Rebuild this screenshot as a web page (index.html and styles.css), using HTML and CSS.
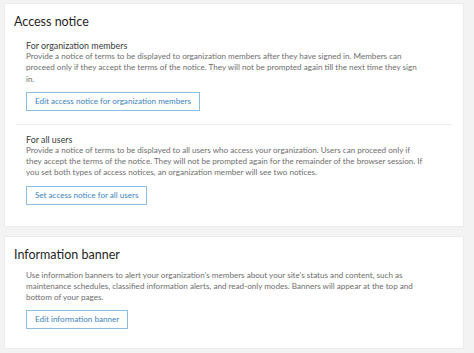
FILE: index.html
```html
<!DOCTYPE html>
<html>
<head>
<meta charset="utf-8">
<link rel="stylesheet" href="styles.css">
</head>
<body>
<div class="page">
  <section class="card card-access">
    <h2 class="card-title">Access notice</h2>
    <div class="block">
      <h3 class="block-title">For organization members</h3>
      <p class="block-text">Provide a notice of terms to be displayed to organization members after they have signed in. Members can proceed only if they accept the terms of the notice. They will not be prompted again till the next time they sign in.</p>
      <button class="btn">Edit access notice for organization members</button>
    </div>
    <hr class="divider">
    <div class="block block-second">
      <h3 class="block-title">For all users</h3>
      <p class="block-text">Provide a notice of terms to be displayed to all users who access your organization. Users can proceed only if they accept the terms of the notice. They will not be prompted again for the remainder of the browser session. If you set both types of access notices, an organization member will see two notices.</p>
      <button class="btn">Set access notice for all users</button>
    </div>
  </section>
  <section class="card card-banner">
    <h2 class="card-title">Information banner</h2>
    <div class="block block-banner">
      <p class="block-text">Use information banners to alert your organization's members about your site's status and content, such as maintenance schedules, classified information alerts, and read-only modes. Banners will appear at the top and bottom of your pages.</p>
      <button class="btn">Edit information banner</button>
    </div>
  </section>
</div>
</body>
</html>
```

FILE: styles.css
```css
* { box-sizing: border-box; }
html, body { margin: 0; padding: 0; }
body {
  background: #f3f3f3;
  font-family: Lato, "Open Sans", sans-serif;
  width: 474px;
  height: 353px;
  overflow: hidden;
}
.page {
  padding: 4px 11px 0 5px;
  display: flex;
  flex-direction: column;
  gap: 11px;
}
.card {
  background: #ffffff;
  box-shadow: 0 0 0 1px #ececec;
  padding: 10px 0 0 9px;
}
.card-access { height: 222px; }
.card-banner { height: 111px; }
.card-title {
  margin: 0;
  font-size: 12.5px;
  line-height: 16px;
  font-weight: 400;
  color: #1f1f1f;
}
.block {
  padding-left: 12px;
  padding-right: 39px;
}
.card-access .block:first-of-type { margin-top: 10px; }
.block-title {
  margin: 0;
  font-size: 8.9px;
  line-height: 11px;
  font-weight: 400;
  color: #3a3a3a;
}
.block-text {
  margin: 0;
  font-size: 8.1px;
  line-height: 11.3px;
  color: #6e6e6e;
}
.btn {
  display: block;
  margin-top: 7px;
  height: 19px;
  padding: 0 8px;
  background: #fff;
  border: 1px solid #8dbde0;
  color: #3d84bd;
  font-family: inherit;
  font-size: 8.1px;
  line-height: 17px;
}
.divider {
  border: 0;
  border-top: 1px solid #ededed;
  margin: 13px 11px 9px 2px;
}
.block-banner { margin-top: 6.5px; }
```
